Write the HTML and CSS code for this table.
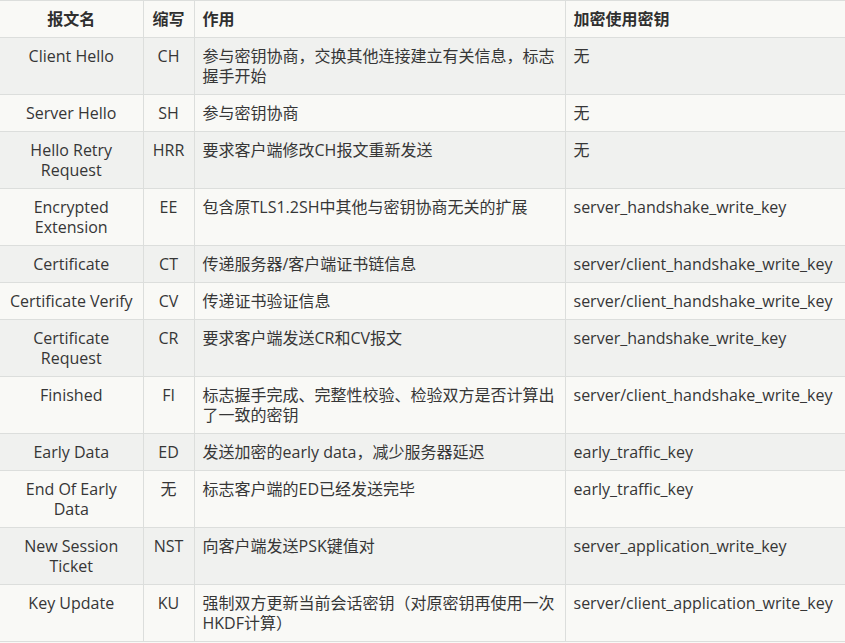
FILE: index.html
```html
<!DOCTYPE html>
<html lang="zh-CN">
<head>
<meta charset="utf-8">
<title>TLS1.3 报文</title>
<link rel="stylesheet" href="styles.css">
</head>
<body>
<table class="msg-table">
  <colgroup>
    <col class="c-name">
    <col class="c-abbr">
    <col class="c-desc">
    <col class="c-key">
  </colgroup>
  <thead>
    <tr>
      <th class="center">报文名</th>
      <th class="center">缩写</th>
      <th>作用</th>
      <th>加密使用密钥</th>
    </tr>
  </thead>
  <tbody>
    <tr><td class="center">Client Hello</td><td class="center">CH</td><td>参与密钥协商，交换其他连接建立有关信息，标志握手开始</td><td>无</td></tr>
    <tr><td class="center">Server Hello</td><td class="center">SH</td><td>参与密钥协商</td><td>无</td></tr>
    <tr><td class="center">Hello Retry Request</td><td class="center">HRR</td><td>要求客户端修改CH报文重新发送</td><td>无</td></tr>
    <tr><td class="center">Encrypted Extension</td><td class="center">EE</td><td>包含原TLS1.2SH中其他与密钥协商无关的扩展</td><td>server_handshake_write_key</td></tr>
    <tr><td class="center">Certificate</td><td class="center">CT</td><td>传递服务器/客户端证书链信息</td><td>server/client_handshake_write_key</td></tr>
    <tr><td class="center">Certificate Verify</td><td class="center">CV</td><td>传递证书验证信息</td><td>server/client_handshake_write_key</td></tr>
    <tr><td class="center">Certificate Request</td><td class="center">CR</td><td>要求客户端发送CR和CV报文</td><td>server_handshake_write_key</td></tr>
    <tr><td class="center">Finished</td><td class="center">FI</td><td>标志握手完成、完整性校验、检验双方是否计算出了一致的密钥</td><td>server/client_handshake_write_key</td></tr>
    <tr><td class="center">Early Data</td><td class="center">ED</td><td>发送加密的early data，减少服务器延迟</td><td>early_traffic_key</td></tr>
    <tr><td class="center">End Of Early Data</td><td class="center">无</td><td>标志客户端的ED已经发送完毕</td><td>early_traffic_key</td></tr>
    <tr><td class="center">New Session Ticket</td><td class="center">NST</td><td>向客户端发送PSK键值对</td><td>server_application_write_key</td></tr>
    <tr><td class="center">Key Update</td><td class="center">KU</td><td>强制双方更新当前会话密钥（对原密钥再使用一次HKDF计算）</td><td>server/client_application_write_key</td></tr>
  </tbody>
</table>
</body>
</html>
```

FILE: styles.css
```css
html, body {
  margin: 0;
  padding: 0;
  background: #f9f9f6;
  overflow: hidden;
}

.msg-table {
  border-collapse: collapse;
  table-layout: fixed;
  width: 860px;
  font-family: "Open Sans", "Noto Sans CJK SC", sans-serif;
  font-size: 16px;
  line-height: 20px;
  color: #363636;
}

.c-name { width: 143px; }
.c-abbr { width: 51px; }
.c-desc { width: 371px; }
.c-key { width: 295px; }

.msg-table th,
.msg-table td {
  border: 1px solid #dcdedc;
  padding: 8px 8px;
  text-align: left;
  vertical-align: top;
}

.msg-table th {
  font-weight: bold;
  background: #f9f9f6;
  color: #2f2f2f;
}

.msg-table tr:first-child th,
.msg-table tr:first-child td {
  border-top: 1px solid #dcdedc;
}

.msg-table th:first-child,
.msg-table td:first-child {
  border-left: none;
}

.msg-table tbody tr:nth-child(odd) {
  background: #f0f1ef;
}

.msg-table tbody tr:nth-child(even) {
  background: #f9f9f6;
}

.msg-table .center {
  text-align: center;
}
```
